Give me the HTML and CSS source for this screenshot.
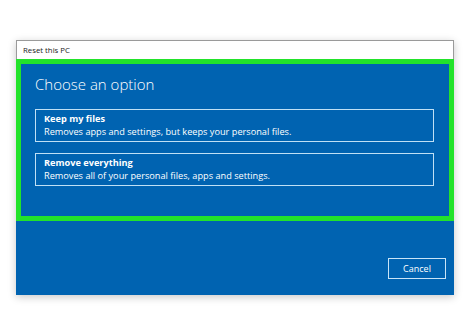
FILE: index.html
```html
<!DOCTYPE html>
<html>
<head>
<meta charset="utf-8">
<link rel="stylesheet" href="styles.css">
</head>
<body>
<div class="window">
  <div class="titlebar">Reset this PC</div>
  <div class="content">
    <section class="highlight">
      <h1 class="heading">Choose an option</h1>
      <div class="option">
        <div class="opt-title">Keep my files</div>
        <div class="opt-desc">Removes apps and settings, but keeps your personal files.</div>
      </div>
      <div class="option">
        <div class="opt-title">Remove everything</div>
        <div class="opt-desc">Removes all of your personal files, apps and settings.</div>
      </div>
    </section>
    <div class="footer">
      <button class="cancel">Cancel</button>
    </div>
  </div>
</div>
</body>
</html>
```

FILE: styles.css
```css
html, body {
  margin: 0;
  padding: 0;
  background: #ffffff;
}
body {
  width: 474px;
  height: 336px;
  font-family: "Open Sans", "Noto Sans", "Liberation Sans", sans-serif;
  overflow: hidden;
}
.window {
  margin: 40px 0 0 16px;
  width: 438px;
  height: 255px;
  display: flex;
  flex-direction: column;
  box-shadow: 0 2px 8px rgba(0, 0, 0, 0.22);
}
.titlebar {
  height: 19px;
  box-sizing: border-box;
  border: 1px solid #9a9a9a;
  border-bottom: none;
  background: #ffffff;
  color: #1a1a1a;
  font-size: 7.8px;
  line-height: 18px;
  padding-left: 6px;
}
.content {
  flex: 1;
  background: #0063b1;
  display: flex;
  flex-direction: column;
}
.highlight {
  height: 162px;
  box-sizing: border-box;
  border: 5px solid #22e32a;
  padding: 9px 15px 0 14px;
}
.heading {
  margin: 0 0 14px 0;
  font-weight: 300;
  font-size: 15px;
  line-height: 22px;
  color: #ffffff;
}
.option {
  height: 33px;
  box-sizing: border-box;
  border: 1.5px solid #bfe0f5;
  padding: 2px 8px 0 8px;
  margin-bottom: 11px;
  color: #ffffff;
}
.opt-title {
  font-weight: 700;
  font-size: 9.2px;
  line-height: 13px;
}
.opt-desc {
  font-size: 9.2px;
  line-height: 14px;
}
.footer {
  flex: 1;
  display: flex;
  justify-content: flex-end;
  align-items: flex-end;
  padding: 0 8px 16px 0;
}
.cancel {
  width: 58px;
  height: 21px;
  box-sizing: border-box;
  border: 1.5px solid #c8e4f7;
  background: transparent;
  color: #ffffff;
  font-family: "Open Sans", "Noto Sans", "Liberation Sans", sans-serif;
  font-size: 9px;
  padding: 0;
}
```
